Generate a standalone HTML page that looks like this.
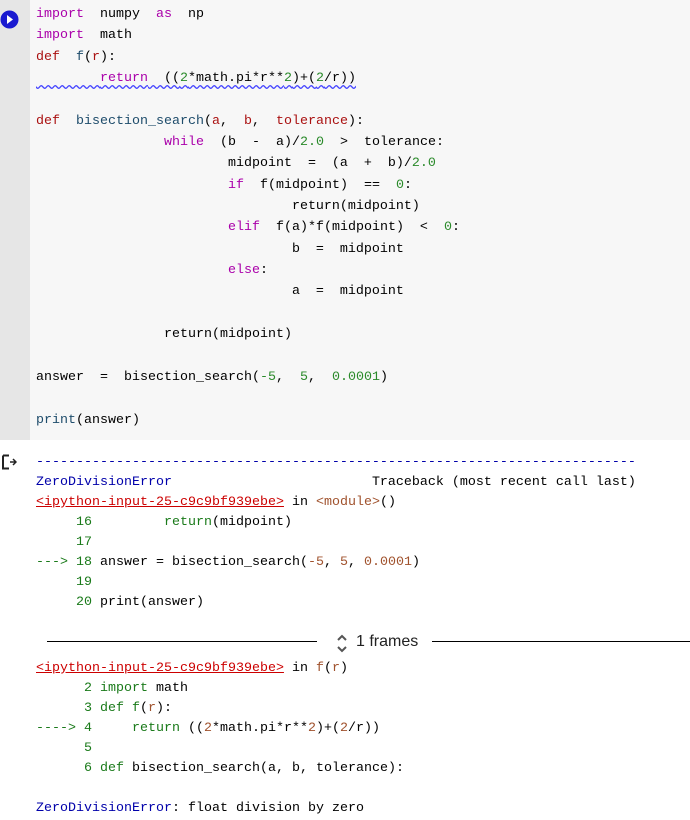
<!DOCTYPE html>
<html><head><meta charset="utf-8"><style>
body{margin:0;width:690px;height:820px;background:#fff;position:relative;overflow:hidden;font-family:"Liberation Mono","Noto Sans CJK SC",monospace;font-size:13.33px;}
.gut{position:absolute;left:0;top:0;width:30px;height:440px;background:#e6e6e6}
.cell{position:absolute;left:30px;top:0;width:660px;height:440px;background:#f7f7f7}
pre{margin:0;font:inherit;position:absolute;left:36px;white-space:pre}
.c{top:4px;line-height:21.35px;color:#000}
.k{color:#a0a}.d{color:#a11}.f{color:#1e4c6b}.n{color:#2a8a2a}.p{color:#a11}
.o{line-height:20px}
.g{color:#1a7a1a}.r{color:#c00;text-decoration:underline}.b{color:#a0522d}.bl{color:#00a}
.sq{text-decoration:underline wavy #44f;text-underline-offset:3px}
</style></head><body>
<div class="gut"></div><div class="cell"></div>
<svg style="position:absolute;left:0;top:10px" width="20" height="20"><circle cx="9.5" cy="9.5" r="9" fill="#1a1ad0"/><path d="M7 5 L13 9.5 L7 14Z" fill="#fff"/></svg>
<pre class="c"><span class="k">import</span>  numpy  <span class="k">as</span>  np
<span class="k">import</span>  math
<span class="d">def</span>  <span class="f">f</span>(<span class="p">r</span>):
<span class="sq">        <span class="k">return</span>  ((<span class="n">2</span>*math.pi*r**<span class="n">2</span>)+(<span class="n">2</span>/r))</span>

<span class="d">def</span>  <span class="f">bisection_search</span>(<span class="p">a</span>,  <span class="p">b</span>,  <span class="p">tolerance</span>):
                <span class="k">while</span>  (b  -  a)/<span class="n">2.0</span>  &gt;  tolerance:
                        midpoint  =  (a  +  b)/<span class="n">2.0</span>
                        <span class="k">if</span>  f(midpoint)  ==  <span class="n">0</span>:
                                return(midpoint)
                        <span class="k">elif</span>  f(a)*f(midpoint)  &lt;  <span class="n">0</span>:
                                b  =  midpoint
                        <span class="k">else</span>:
                                a  =  midpoint

                return(midpoint)

answer  =  bisection_search(<span class="n">-5</span>,  <span class="n">5</span>,  <span class="n">0.0001</span>)

<span class="f">print</span>(answer)</pre>
<svg style="position:absolute;left:1px;top:454px" width="16" height="16"><path d="M2 1.5 H8 M2 1.5 V14.5 H8" stroke="#222" stroke-width="2" fill="none"/><path d="M9 8 H15 M12 5 L15 8 L12 11" stroke="#222" stroke-width="1.5" fill="none"/></svg>
<pre class="o" style="top:453px"><span class="bl">---------------------------------------------------------------------------</span>
<span class="bl">ZeroDivisionError</span>                         Traceback (most recent call last)
<span class="r">&lt;ipython-input-25-c9c9bf939ebe&gt;</span> in <span class="b">&lt;module&gt;</span>()
<span class="g">     16</span>         <span class="g">return</span>(midpoint)
<span class="g">     17</span>
<span class="g">---&gt; 18</span> answer = bisection_search(<span class="b">-5</span>, <span class="b">5</span>, <span class="b">0.0001</span>)
<span class="g">     19</span>
<span class="g">     20</span> print(answer)</pre>
<div style="position:absolute;left:47px;top:641px;width:270px;height:1px;background:#000"></div>
<svg style="position:absolute;left:336px;top:633px" width="12" height="22"><path d="M2 7 L6 3 L10 7 M2 14 L6 18 L10 14" stroke="#555" stroke-width="2" fill="none"/></svg>
<div style="position:absolute;left:356px;top:633px;font-family:'Liberation Sans',sans-serif;font-size:16px;color:#222">1 frames</div>
<div style="position:absolute;left:432px;top:641px;width:258px;height:1px;background:#000"></div>
<pre class="o" style="top:659px"><span class="r">&lt;ipython-input-25-c9c9bf939ebe&gt;</span> in <span class="b">f</span>(<span class="b">r</span>)
<span class="g">      2</span> <span class="g">import</span> math
<span class="g">      3</span> <span class="g">def</span> <span class="g">f</span>(<span class="b">r</span>):
<span class="g">----&gt; 4</span>     <span class="g">return</span> ((<span class="b">2</span>*math.pi*r**<span class="b">2</span>)+(<span class="b">2</span>/r))
<span class="g">      5</span>
<span class="g">      6</span> <span class="g">def</span> bisection_search(a, b, tolerance):

<span class="bl">ZeroDivisionError</span>: float division by zero</pre>
</body></html>
